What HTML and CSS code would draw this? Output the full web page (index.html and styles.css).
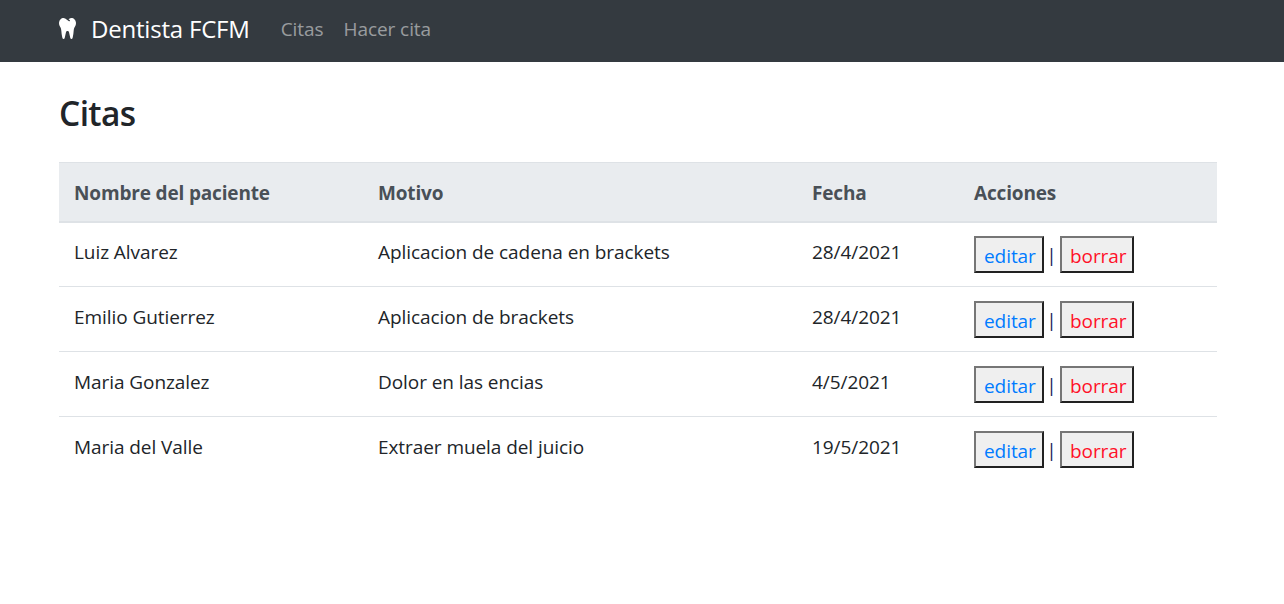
FILE: index.html
```html
<!DOCTYPE html>
<html lang="es">
<head>
<meta charset="utf-8">
<title>Dentista FCFM</title>
<link rel="stylesheet" href="styles.css">
</head>
<body>
<nav class="navbar">
  <a class="brand" href="#">
    <svg class="tooth" viewBox="0 0 448 512" preserveAspectRatio="none" aria-hidden="true"><path fill="#fff" d="M443.98 96.25c-11.01-45.22-47.11-82.06-92.01-93.72-32.19-8.36-63 5.1-89.14 24.33-3.25 2.39-6.96 3.73-10.5 5.48l28.32 18.21c7.42 4.77 9.58 14.67 4.8 22.11-4.46 6.95-14.27 9.86-22.11 4.8L162.83 12.84c-20.7-10.85-43.38-16.4-66.81-10.31-44.9 11.67-81 48.5-92.01 93.72-10.13 41.62-.42 80.81 21.5 110.43 23.36 31.57 32.68 68.66 36.29 107.35 4.4 47.16 10.33 94.16 20.94 140.32l7.8 33.95c3.19 13.87 15.49 23.7 29.67 23.7 13.97 0 26.15-9.55 29.54-23.16l34.47-138.42c4.56-18.32 20.96-31.16 39.76-31.16s35.2 12.85 39.76 31.16l34.47 138.42c3.39 13.61 15.57 23.16 29.54 23.16 14.18 0 26.48-9.83 29.67-23.7l7.8-33.95c10.61-46.15 16.53-93.16 20.94-140.32 3.61-38.7 12.93-75.78 36.29-107.35 21.95-29.61 31.66-68.8 21.53-110.43z"/></svg>
    <span class="brand-name">Dentista FCFM</span>
  </a>
  <a class="nav-link" href="#">Citas</a>
  <a class="nav-link" href="#">Hacer cita</a>
</nav>
<main class="content">
  <h1 class="title">Citas</h1>
  <table class="table">
    <thead>
      <tr><th class="c1">Nombre del paciente</th><th class="c2">Motivo</th><th class="c3">Fecha</th><th>Acciones</th></tr>
    </thead>
    <tbody>
      <tr><td>Luiz Alvarez</td><td>Aplicacion de cadena en brackets</td><td>28/4/2021</td><td class="actions-cell"><div class="actions"><button class="btn edit">editar</button><span class="sep">|</span><button class="btn del">borrar</button></div></td></tr>
      <tr><td>Emilio Gutierrez</td><td>Aplicacion de brackets</td><td>28/4/2021</td><td class="actions-cell"><div class="actions"><button class="btn edit">editar</button><span class="sep">|</span><button class="btn del">borrar</button></div></td></tr>
      <tr><td>Maria Gonzalez</td><td>Dolor en las encias</td><td>4/5/2021</td><td class="actions-cell"><div class="actions"><button class="btn edit">editar</button><span class="sep">|</span><button class="btn del">borrar</button></div></td></tr>
      <tr><td>Maria del Valle</td><td>Extraer muela del juicio</td><td>19/5/2021</td><td class="actions-cell"><div class="actions"><button class="btn edit">editar</button><span class="sep">|</span><button class="btn del">borrar</button></div></td></tr>
    </tbody>
  </table>
</main>
</body>
</html>
```
FILE: styles.css
```css
* { box-sizing: border-box; }
html, body { margin: 0; padding: 0; }
body {
  font-family: "Open Sans", "Noto Sans", sans-serif;
  font-size: 19px;
  line-height: 27px;
  letter-spacing: -0.07px;
  color: #212529;
  background: #fff;
}
.navbar {
  display: flex;
  align-items: center;
  height: 62px;
  padding: 0 59px 4px;
  background: #343a40;
}
.brand {
  display: flex;
  align-items: center;
  margin-right: 21px;
  color: #fff;
  text-decoration: none;
  font-size: 24px;
  letter-spacing: -0.2px;
}
.brand-name { margin-bottom: 2px; margin-left: -0.5px; }
.tooth { width: 17px; height: 21px; margin: 0 15.5px 2px 0; }
.nav-link {
  padding: 0 10px;
  color: rgba(255, 255, 255, 0.5);
  text-decoration: none;
}
.content { padding: 24px 67px 0 59px; }
.title {
  margin: 0 0 21px;
  font-size: 33.5px;
  font-weight: 600;
  line-height: 55px;
  letter-spacing: -0.6px;
}
.table { width: 100%; border-collapse: collapse; table-layout: fixed; }
th, td { padding: 0 15px; text-align: left; }
th {
  height: 59px;
  padding-top: 4px;
  font-weight: 700;
  letter-spacing: -0.16px;
  color: #495057;
  background: #e9ecef;
  border-top: 1px solid #dee2e6;
  border-bottom: 2px solid #dee2e6;
}
td {
  height: 65px;
  padding-top: 17px;
  vertical-align: top;
  border-top: 1px solid #dee2e6;
}
tbody tr:first-child td { border-top: 0; padding-top: 16px; }
td.actions-cell { padding-top: 14px; }
tbody tr:first-child td.actions-cell { padding-top: 13px; }
.c1 { width: 304px; }
.c2 { width: 434px; }
.c3 { width: 162px; }
.actions { display: flex; align-items: center; }
.btn {
  height: 37px;
  padding: 4px 8px 0;
  font: inherit;
  letter-spacing: inherit;
  background: #efefef;
  border: 2px solid;
  border-color: #767676 #212121 #212121 #767676;
  border-radius: 0;
}
.edit { width: 70px; color: #007bff; }
.del { width: 74px; color: #ff1028; }
.sep { width: 16px; padding: 2px 1px 0 0; text-align: center; color: #141c5c; }
```
